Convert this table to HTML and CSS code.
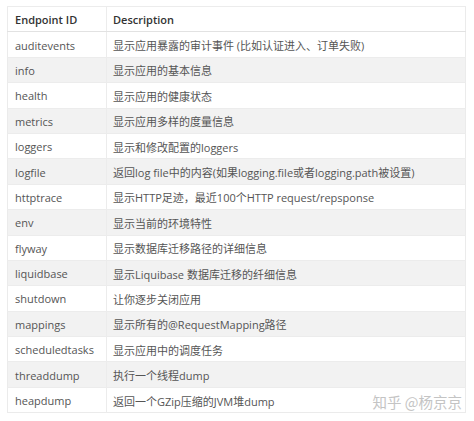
FILE: index.html
```html
<!DOCTYPE html>
<html>
<head>
<meta charset="utf-8">
<link rel="stylesheet" href="styles.css">
</head>
<body>
<div class="wrap">
<table class="endpoints">
  <thead>
    <tr><th class="id">Endpoint ID</th><th>Description</th></tr>
  </thead>
  <tbody>
    <tr><td>auditevents</td><td>显示应用暴露的审计事件 (比如认证进入、订单失败)</td></tr>
    <tr><td>info</td><td>显示应用的基本信息</td></tr>
    <tr><td>health</td><td>显示应用的健康状态</td></tr>
    <tr><td>metrics</td><td>显示应用多样的度量信息</td></tr>
    <tr><td>loggers</td><td>显示和修改配置的loggers</td></tr>
    <tr><td>logfile</td><td>返回log file中的内容(如果logging.file或者logging.path被设置)</td></tr>
    <tr><td>httptrace</td><td>显示HTTP足迹，最近100个HTTP request/repsponse</td></tr>
    <tr><td>env</td><td>显示当前的环境特性</td></tr>
    <tr><td>flyway</td><td>显示数据库迁移路径的详细信息</td></tr>
    <tr><td>liquidbase</td><td>显示Liquibase 数据库迁移的纤细信息</td></tr>
    <tr><td>shutdown</td><td>让你逐步关闭应用</td></tr>
    <tr><td>mappings</td><td>显示所有的@RequestMapping路径</td></tr>
    <tr><td>scheduledtasks</td><td>显示应用中的调度任务</td></tr>
    <tr><td>threaddump</td><td>执行一个线程dump</td></tr>
    <tr><td>heapdump</td><td>返回一个GZip压缩的JVM堆dump</td></tr>
  </tbody>
</table>
<div class="watermark">知乎 @杨京京</div>
</div>
</body>
</html>
```

FILE: styles.css
```css
html, body {
  margin: 0;
  padding: 0;
  background: #ffffff;
}
.wrap {
  position: relative;
  padding: 6px 0 0 7px;
  width: 459px;
}
.endpoints {
  width: 459px;
  border-collapse: collapse;
  font-family: "Open Sans", "Noto Sans CJK SC", sans-serif;
  font-size: 11px;
  color: #555555;
  border: 1px solid #ebebeb;
}
.endpoints th, .endpoints td {
  height: 25.4px;
  padding: 1px 6px 0 6px;
  text-align: left;
  vertical-align: middle;
  border-top: 1px solid #ececec;
  box-sizing: border-box;
  white-space: nowrap;
}
.endpoints th {
  font-weight: 600;
  color: #333333;
  border-bottom: 1px solid #e2e2e2;
}
.endpoints th.id, .endpoints td:first-child {
  width: 99px;
  padding-left: 7px;
  border-right: 1px solid #ececec;
}
.endpoints tbody tr:nth-child(even) {
  background: #f2f2f2;
}
.watermark {
  position: absolute;
  right: 4px;
  top: 391px;
  font-family: "Noto Sans CJK SC", sans-serif;
  font-size: 14.5px;
  color: #c4c4c4;
  background: rgba(255,255,255,0.6);
}
```
